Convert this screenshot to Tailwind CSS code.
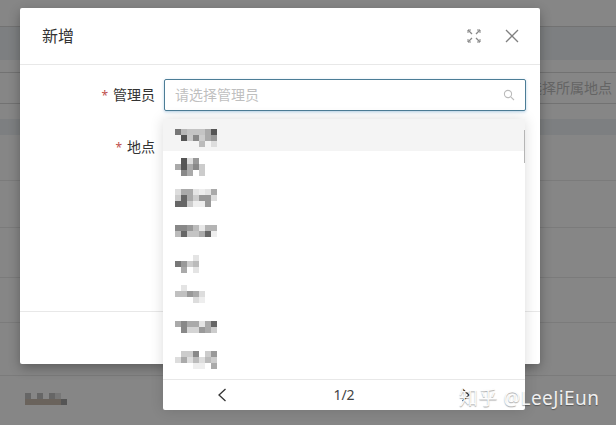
<!doctype html>
<html lang="zh">

<head>
    <meta charset="utf-8">
    <title>新增</title>
    <script src="https://cdn.jsdelivr.net/npm/@tailwindcss/browser@4"></script>
</head>

<body class="bg-[#868686] font-['Noto_Sans','Noto_Sans_CJK_SC',sans-serif]">
    <div class="relative w-[616px] h-[425px] overflow-hidden">

        <!-- page behind the mask -->
        <div class="flex flex-col h-full">
            <div class="h-[26px] border-b border-[#727272] box-content"></div>
            <div class="h-[33px] bg-[#7d7f81]"></div>
            <div class="h-[59px] bg-[#868686] pt-3">
                <div class="h-[32px] border-y border-[#727272] flex items-center justify-end pr-[4px] text-sm text-[#646464]">请选择所属地点</div>
            </div>
            <div class="h-[16px] bg-[#7d7f81]"></div>
            <div class="h-[45px] border-b border-[#7b7b7b] box-content"></div>
            <div class="h-[46px] border-b border-[#7b7b7b] box-content"></div>
            <div class="h-[49px] border-b border-[#7b7b7b] box-content"></div>
            <div class="h-[44px] border-b border-[#7b7b7b] box-content"></div>
            <div class="h-[52px] border-b border-[#7b7b7b] box-content"></div>
            <div class="flex-1 pl-[25px] pt-[17px]">
                <svg width="42" height="12" viewBox="0 0 42 12" class="block">
                    <rect x="0" y="0" width="6" height="6" fill="#666"/><rect x="12" y="0" width="6" height="6" fill="#666"/><rect x="24" y="0" width="6" height="6" fill="#666"/><rect x="30" y="0" width="6" height="6" fill="#777"/>
                    <rect x="0" y="6" width="36" height="6" fill="#6a635c"/><rect x="36" y="6" width="6" height="6" fill="#555"/>
                </svg>
            </div>
        </div>

        <!-- modal -->
        <div class="absolute left-[20px] top-[8px] w-[520px] h-[356px] bg-white rounded-[2px] shadow-[0_4px_12px_rgba(0,0,0,0.3)] flex flex-col">
            <div class="h-[56px] border-b border-[#e8e8e8] flex items-center pl-[22px] pr-[20px] box-content">
                <span class="text-base text-[#333]">新增</span>
                <svg class="ml-auto" width="16" height="16" viewBox="0 0 16 16" fill="none" stroke="#888" stroke-width="1.3">
                    <path d="M2 2l4 4M14 2l-4 4M2 14l4-4M14 14l-4-4"/>
                    <path d="M2 5V2h3M11 2h3v3M2 11v3h3M14 11v3h-3" stroke-width="1"/>
                </svg>
                <svg class="ml-[22px]" width="16" height="16" viewBox="0 0 16 16" fill="none" stroke="#808080" stroke-width="1.3">
                    <path d="M2 2l12 12M14 2L2 14"/>
                </svg>
            </div>

            <div class="flex-1 pt-[14px] pr-[14px]">
                <div class="flex items-center h-[32px]">
                    <label class="w-[135px] text-right text-sm text-[#333]"><span class="text-[12px] text-[#c0504d] mr-[5px]">*</span>管理员</label>
                    <div class="ml-[9px] flex-1 h-[32px] border border-[#4c7d96] rounded-[2px] shadow-[0_1px_3px_rgba(90,150,200,0.45)] flex items-center pl-[11px] pr-[10px]">
                        <span class="text-sm text-[#bfbfbf] -ml-px">请选择管理员</span>
                        <svg class="ml-auto" width="12" height="12" viewBox="0 0 12 12" fill="none" stroke="#bbb" stroke-width="1.1">
                            <circle cx="5" cy="5" r="3.6"/><path d="M7.8 7.8L11 11"/>
                        </svg>
                    </div>
                </div>
                <div class="flex items-center h-[32px] mt-[20px]">
                    <label class="w-[135px] text-right text-sm text-[#333]"><span class="text-[12px] text-[#c0504d] mr-[5px]">*</span>地点</label>
                </div>
            </div>

            <div class="h-[52px] border-t border-[#e8e8e8] box-content"></div>
        </div>

        <!-- select dropdown -->
        <div class="absolute left-[163px] top-[119px] w-[362px] h-[291px] bg-white rounded-b-[2px] shadow-[0_0_14px_rgba(0,0,0,0.14)] flex flex-col">
            <ul class="flex-1">
                <li class="h-[32px] flex items-center pl-[12px] bg-[#f4f4f4]">
                    <svg class="mt-[6px]" width="42" height="18" viewBox="0 0 42 18">
                        <rect width="6" height="6" fill="#777"/><rect x="6" width="6" height="6" fill="#b8b8b8"/><rect x="12" width="18" height="6" fill="#c4c4c4"/><rect x="30" width="6" height="6" fill="#aaa"/><rect x="36" width="6" height="6" fill="#555"/>
                        <rect x="6" y="6" width="6" height="6" fill="#555"/><rect x="12" y="6" width="6" height="6" fill="#c8c8c8"/><rect x="18" y="6" width="6" height="6" fill="#888"/><rect x="24" y="6" width="6" height="6" fill="#ccc"/><rect x="30" y="6" width="6" height="6" fill="#aaa"/><rect x="36" y="6" width="6" height="6" fill="#999"/>
                        <rect x="24" y="12" width="6" height="6" fill="#bbb"/><rect x="36" y="12" width="6" height="6" fill="#ddd"/>
                    </svg>
                </li>
                <li class="h-[32px] flex items-center pl-[12px]">
                    <svg width="30" height="18" viewBox="0 0 30 18">
                        <rect x="6" width="6" height="6" fill="#555"/><rect x="12" width="6" height="6" fill="#ddd"/><rect x="18" width="6" height="6" fill="#999"/>
                        <rect y="6" width="6" height="6" fill="#aaa"/><rect x="6" y="6" width="6" height="6" fill="#555"/><rect x="12" y="6" width="6" height="6" fill="#aaa"/><rect x="18" y="6" width="6" height="6" fill="#888"/><rect x="24" y="6" width="6" height="6" fill="#ccc"/>
                        <rect x="6" y="12" width="6" height="6" fill="#888"/><rect x="12" y="12" width="6" height="6" fill="#aaa"/><rect x="24" y="12" width="6" height="6" fill="#ccc"/>
                    </svg>
                </li>
                <li class="h-[32px] flex items-center pl-[12px]">
                    <svg class="-mt-[2px]" width="42" height="18" viewBox="0 0 42 18">
                        <rect width="6" height="6" fill="#ddd"/><rect x="6" width="12" height="6" fill="#aaa"/><rect x="18" width="6" height="6" fill="#e4e4e4"/><rect x="24" width="6" height="6" fill="#eee"/><rect x="30" width="6" height="6" fill="#e4e4e4"/><rect x="36" width="6" height="6" fill="#aaa"/>
                        <rect y="6" width="6" height="6" fill="#ccc"/><rect x="6" y="6" width="6" height="6" fill="#666"/><rect x="12" y="6" width="6" height="6" fill="#aaa"/><rect x="18" y="6" width="6" height="6" fill="#ccc"/><rect x="24" y="6" width="6" height="6" fill="#999"/><rect x="30" y="6" width="6" height="6" fill="#999"/><rect x="36" y="6" width="6" height="6" fill="#ddd"/>
                        <rect y="12" width="12" height="6" fill="#666"/><rect x="12" y="12" width="6" height="6" fill="#ccc"/><rect x="18" y="12" width="6" height="6" fill="#eee"/><rect x="24" y="12" width="6" height="6" fill="#eee"/><rect x="30" y="12" width="6" height="6" fill="#999"/>
                    </svg>
                </li>
                <li class="h-[32px] flex items-center pl-[12px]">
                    <svg width="42" height="12" viewBox="0 0 42 12">
                        <rect width="12" height="6" fill="#888"/><rect x="12" width="6" height="6" fill="#999"/><rect x="18" width="6" height="6" fill="#bbb"/><rect x="24" width="6" height="6" fill="#e8e8e8"/><rect x="30" width="12" height="6" fill="#b4b4b4"/>
                        <rect y="6" width="6" height="6" fill="#bbb"/><rect x="6" y="6" width="6" height="6" fill="#666"/><rect x="12" y="6" width="12" height="6" fill="#c4c4c4"/><rect x="24" y="6" width="6" height="6" fill="#aaa"/><rect x="30" y="6" width="6" height="6" fill="#666"/><rect x="36" y="6" width="6" height="6" fill="#eee"/>
                    </svg>
                </li>
                <li class="h-[32px] flex items-center pl-[12px]">
                    <svg class="mt-[2px]" width="24" height="18" viewBox="0 0 24 18">
                        <rect x="18" width="6" height="6" fill="#e4e4e4"/>
                        <rect y="6" width="6" height="6" fill="#777"/><rect x="6" y="6" width="6" height="6" fill="#999"/><rect x="12" y="6" width="6" height="6" fill="#ccc"/><rect x="18" y="6" width="6" height="6" fill="#bbb"/>
                        <rect x="6" y="12" width="6" height="6" fill="#aaa"/><rect x="18" y="12" width="6" height="6" fill="#e4e4e4"/>
                    </svg>
                </li>
                <li class="h-[32px] flex items-center pl-[12px]">
                    <svg class="-mt-[2px]" width="30" height="18" viewBox="0 0 30 18">
                        <rect x="6" width="6" height="6" fill="#e4e4e4"/>
                        <rect y="6" width="12" height="6" fill="#c0c0c0"/><rect x="12" y="6" width="6" height="6" fill="#999"/><rect x="18" y="6" width="6" height="6" fill="#aaa"/><rect x="24" y="6" width="6" height="6" fill="#ddd"/>
                        <rect x="18" y="12" width="6" height="6" fill="#ddd"/><rect x="24" y="12" width="6" height="6" fill="#eee"/>
                    </svg>
                </li>
                <li class="h-[32px] flex items-center pl-[12px]">
                    <svg width="42" height="12" viewBox="0 0 42 12">
                        <rect width="6" height="6" fill="#aaa"/><rect x="6" width="6" height="6" fill="#888"/><rect x="12" width="12" height="6" fill="#aaa"/><rect x="24" width="6" height="6" fill="#e4e4e4"/><rect x="30" width="6" height="6" fill="#aaa"/><rect x="36" width="6" height="6" fill="#666"/>
                        <rect x="6" y="6" width="6" height="6" fill="#888"/><rect x="12" y="6" width="12" height="6" fill="#d4d4d4"/><rect x="24" y="6" width="6" height="6" fill="#999"/><rect x="30" y="6" width="6" height="6" fill="#aaa"/><rect x="36" y="6" width="6" height="6" fill="#ccc"/>
                    </svg>
                </li>
                <li class="h-[32px] flex items-center pl-[12px]">
                    <svg class="mt-[2px]" width="42" height="18" viewBox="0 0 42 18">
                        <rect x="6" width="12" height="6" fill="#ccc"/><rect x="18" width="6" height="6" fill="#888"/><rect x="30" width="6" height="6" fill="#ccc"/><rect x="36" width="6" height="6" fill="#999"/>
                        <rect y="6" width="6" height="6" fill="#ddd"/><rect x="6" y="6" width="6" height="6" fill="#aaa"/><rect x="12" y="6" width="6" height="6" fill="#ddd"/><rect x="18" y="6" width="6" height="6" fill="#bbb"/><rect x="24" y="6" width="6" height="6" fill="#ddd"/><rect x="30" y="6" width="6" height="6" fill="#bbb"/><rect x="36" y="6" width="6" height="6" fill="#ccc"/>
                        <rect x="18" y="12" width="12" height="6" fill="#eee"/><rect x="36" y="12" width="6" height="6" fill="#aaa"/>
                    </svg>
                </li>
            </ul>
            <div class="h-[30px] border-t border-[#e8e8e8] flex items-center box-content">
                <div class="w-[118px] flex justify-center">
                    <svg width="10" height="14" viewBox="0 0 10 14" fill="none" stroke="#333" stroke-width="1.3"><path d="M8.5 1L2 7l6.500 6"/></svg>
                </div>
                <span class="w-[126px] text-center text-sm text-[#444]">1/2</span>
                <div class="w-[118px] flex justify-center">
                    <svg width="10" height="14" viewBox="0 0 10 14" fill="none" stroke="#333" stroke-width="1.3"><path d="M1.500 1L8 7l-6.500 6"/></svg>
                </div>
            </div>
            <!-- scrollbar -->
            <div class="absolute right-0 top-[11px] w-[1px] h-[33px] bg-[#b5b5b5]"></div>
        </div>

        <!-- watermark -->
        <div class="absolute left-[459px] top-[385px] text-[19px] leading-[26px] tracking-[0.4px] text-white/90 [text-shadow:0_1px_1px_rgba(0,0,0,0.35)] whitespace-nowrap">知乎 @LeeJiEun</div>
    </div>
</body>

</html>
